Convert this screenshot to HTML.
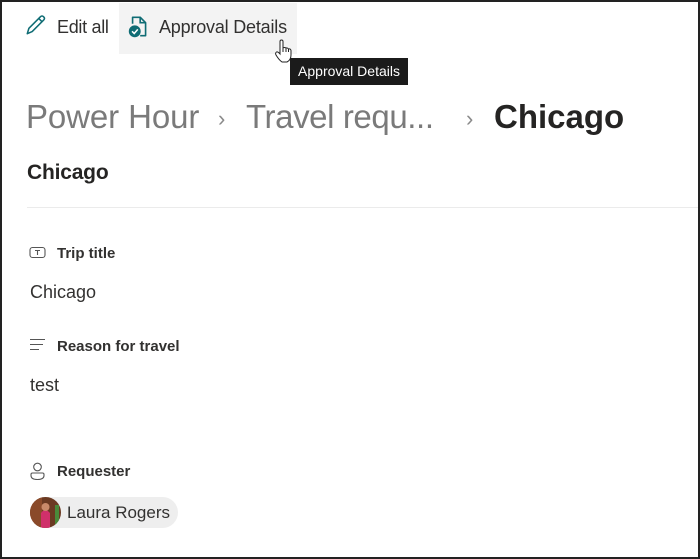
<!DOCTYPE html>
<html><head><meta charset="utf-8"><style>
html,body{margin:0;padding:0;}
body{width:700px;height:559px;position:relative;overflow:hidden;background:#fff;font-family:"Liberation Sans",sans-serif;color:#323130;}
.frame{position:absolute;left:0;top:0;width:696px;height:555px;border:2px solid #222;}
.a{position:absolute;white-space:nowrap;}
</style></head><body>
<div class="frame"></div>
<!-- toolbar -->
<svg class="a" style="left:24px;top:13px" width="24" height="24" viewBox="0 0 22 22"><path d="M3 19 L4.5 14 L15 3.5 Q16.5 2 18 3.5 Q19.5 5 18 6.5 L7.5 17 Z M13.5 5 L16.5 8" fill="none" stroke="#0f6c74" stroke-width="1.4" stroke-linejoin="round"/></svg>
<div class="a" style="left:57px;top:17px;font-size:18px;color:#323130;letter-spacing:-0.3px">Edit all</div>
<div class="a" style="left:119px;top:3px;width:178px;height:51px;background:#f3f3f3"></div>
<svg class="a" style="left:126px;top:14px" width="24" height="26" viewBox="0 0 22 24"><path d="M6 9 V3 H13 L18 8 V20 H13" fill="none" stroke="#0f6c74" stroke-width="1.5" stroke-linejoin="round"/><path d="M13 3 V8 H18" fill="none" stroke="#0f6c74" stroke-width="1.5"/><circle cx="8" cy="16" r="5.5" fill="#0f6c74"/><path d="M5.5 16 L7.5 18 L10.8 14.2" fill="none" stroke="#fff" stroke-width="1.4"/></svg>
<div class="a" style="left:159px;top:17px;font-size:18px;color:#323130;letter-spacing:-0.2px">Approval Details</div>
<svg class="a" style="left:272px;top:38px" width="22" height="26" viewBox="0 0 22 26"><path d="M8 14 V3.5 Q8 2 9.5 2 Q11 2 11 3.5 V10 Q12.5 9 14 10 Q15.5 9.5 16.5 11 Q18.5 10.5 19 12.5 V17 Q19 22 15 24 H10 Q7 22 4 17 Q3 15 4.5 14 Q6 13.5 8 16 Z M11 10 V14 M14 10 V14 M16.5 11 V14" fill="#fff" stroke="#222" stroke-width="1"/></svg>
<div class="a" style="left:290px;top:58px;width:118px;height:27px;background:#1b1b1b;color:#fff;font-size:14px;line-height:27px;text-align:center">Approval Details</div>
<!-- breadcrumb -->
<div class="a" style="left:26px;top:98px;font-size:33px;color:#7a7a7a;letter-spacing:-0.1px">Power Hour</div>
<div class="a" style="left:218px;top:106px;font-size:22px;color:#8a8a8a">›</div>
<div class="a" style="left:246px;top:98px;font-size:33px;color:#7a7a7a;letter-spacing:-0.4px">Travel requ...</div>
<div class="a" style="left:466px;top:106px;font-size:22px;color:#8a8a8a">›</div>
<div class="a" style="left:494px;top:98px;font-size:33px;font-weight:bold;color:#252423">Chicago</div>
<div class="a" style="left:27px;top:161px;font-size:21px;font-weight:bold;color:#252423;letter-spacing:-0.2px">Chicago</div>
<div class="a" style="left:27px;top:207px;width:671px;height:1px;background:#ebebeb"></div>
<!-- fields -->
<svg class="a" style="left:29px;top:246px" width="18" height="14" viewBox="0 0 18 14"><rect x="1" y="1.5" width="15" height="10" rx="2.5" fill="none" stroke="#555" stroke-width="1.1"/><path d="M6 4.5 H11 M8.5 4.5 V9" stroke="#555" stroke-width="1.1"/></svg>
<div class="a" style="left:57px;top:245px;font-size:15px;font-weight:bold;color:#323130">Trip title</div>
<div class="a" style="left:30px;top:282px;font-size:18px;color:#323130">Chicago</div>
<svg class="a" style="left:29px;top:338px" width="18" height="14" viewBox="0 0 18 14"><path d="M1 1.5 H16 M1 6.5 H14 M1 11.5 H10" stroke="#555" stroke-width="1.1"/></svg>
<div class="a" style="left:57px;top:338px;font-size:15px;font-weight:bold;color:#323130">Reason for travel</div>
<div class="a" style="left:30px;top:375px;font-size:18px;color:#323130">test</div>
<svg class="a" style="left:29px;top:462px" width="18" height="20" viewBox="0 0 18 20"><circle cx="8.5" cy="5" r="3.8" fill="none" stroke="#555" stroke-width="1.1"/><path d="M2 12.5 Q2 11 3.5 11 H13.5 Q15 11 15 12.5 V13.5 Q15 17.5 8.5 17.5 Q2 17.5 2 13.5 Z" fill="none" stroke="#555" stroke-width="1.1"/></svg>
<div class="a" style="left:57px;top:463px;font-size:15px;font-weight:bold;color:#323130">Requester</div>
<div class="a" style="left:30px;top:497px;width:148px;height:31px;border-radius:16px;background:#eeeeee"></div>
<svg class="a" style="left:30px;top:497px" width="31" height="31" viewBox="0 0 31 31"><defs><clipPath id="c"><circle cx="15.5" cy="15.5" r="15.5"/></clipPath></defs><g clip-path="url(#c)"><rect width="31" height="31" fill="#6b3a22"/><rect x="0" y="0" width="12" height="31" fill="#8a4a2a"/><path d="M11 31 V16 Q15 10 20 16 V31 Z" fill="#d0306a"/><circle cx="15.5" cy="10" r="4" fill="#c98a6a"/><rect x="25" y="8" width="4" height="20" fill="#4a8a3a"/></g></svg>
<div class="a" style="left:67px;top:503px;font-size:17px;color:#323130">Laura Rogers</div>
</body></html>
